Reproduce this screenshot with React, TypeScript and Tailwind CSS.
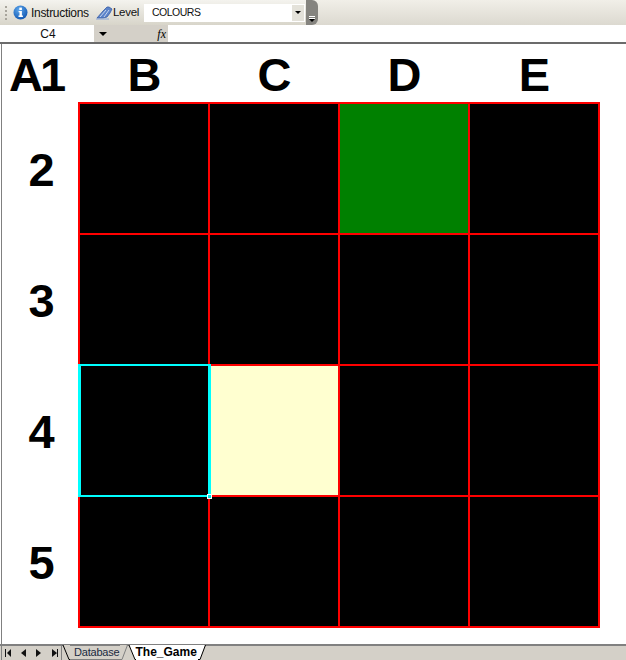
const cells = [
  "bg-black", "bg-black", "bg-[#008000]", "bg-black",
  "bg-black", "bg-black", "bg-black", "bg-black",
  "selected", "bg-[#ffffd0]", "bg-black", "bg-black",
  "bg-black", "bg-black", "bg-black", "bg-black",
];

function InfoIcon() {
  return (
    <svg width="15" height="15" viewBox="0 0 15 15">
      <defs>
        <radialGradient id="info" cx="40%" cy="30%" r="75%">
          <stop offset="0" stopColor="#5fa8ec" />
          <stop offset="1" stopColor="#0f55b0" />
        </radialGradient>
      </defs>
      <circle cx="7.5" cy="7.5" r="7" fill="url(#info)" />
      <rect x="6.3" y="2.6" width="2.6" height="2.4" fill="#fff" />
      <path d="M5.6 6h3.3v4.6h1v1.3H5.5v-1.3h1V7.3h-.9z" fill="#fff" />
    </svg>
  );
}

function LevelIcon() {
  return (
    <svg width="17" height="14" viewBox="0 0 17 14">
      <path d="M1 12 L7 5 L11 1 L13 1 L16 3 L14 7 L11 11 L7 12 L3 12 Z" fill="#5c83c9" stroke="#3a5ea6" strokeWidth="0.8" />
      <path d="M4 11 L10 4 M8 11 L13 4" stroke="#cfdcf2" strokeWidth="0.9" />
      <path d="M0 13 H13" stroke="#8aa6d8" strokeWidth="1" />
    </svg>
  );
}

function Tab({ label, active }: { label: string; active?: boolean }) {
  const fill = active ? "#ffffff" : "#d4d0c8";
  return (
    <div className="flex h-[15px] items-stretch">
      <svg width="8" height="15" viewBox="0 0 8 15" className="shrink-0">
        <path d="M1 0 L7 14.5 H8 V0 Z" fill={fill} />
        <path d="M1 0 L7 14.5 H8" fill="none" stroke="#000" strokeWidth="1" />
      </svg>
      <div
        className={
          active
            ? "flex items-center border-b border-white bg-white pr-[1px] text-[12px] font-bold text-black"
            : "flex items-center border-b border-[#808080] pl-[4px] text-[11px] tracking-[-0.2px] text-[#1a2a40]"
        }
      >
        {label}
      </div>
      <svg width="8" height="15" viewBox="0 0 8 15" className="shrink-0">
        <path d="M7 0 L2 14.5 H0 V0 Z" fill={fill} />
        <path d="M7.5 0 L2 14.5 H0" fill="none" stroke={active ? "#000" : "#808080"} strokeWidth="1" />
      </svg>
    </div>
  );
}

function NavArrows() {
  return (
    <svg width="59" height="12" viewBox="0 0 59 12" className="shrink-0">
      <path d="M3 2v8h1V2zM9 2v8L5 6z" fill="#111" />
      <path d="M24 2v8l-5-4z" fill="#111" />
      <path d="M34 2v8l5-4z" fill="#111" />
      <path d="M50 2v8l5-4zM56 2v8h-1V2z" fill="#111" />
    </svg>
  );
}

export default function App() {
  return (
    <div className="flex h-[660px] w-[626px] flex-col overflow-hidden bg-white font-['Liberation_Sans',sans-serif]">
      {/* toolbar */}
      <div className="flex h-[25px] shrink-0 bg-gradient-to-b from-[#f1efe8] to-[#dcd9d0]">
        <div className="flex h-[25px] w-[318px] items-center rounded-r-md bg-gradient-to-b from-[#f4f3ee] to-[#d8d5ca]">
          <div className="ml-[5px] flex h-[14px] w-[3px] flex-col justify-between">
            <div className="h-[2px] w-[2px] bg-[#a8a59c]" />
            <div className="h-[2px] w-[2px] bg-[#a8a59c]" />
            <div className="h-[2px] w-[2px] bg-[#a8a59c]" />
            <div className="h-[2px] w-[2px] bg-[#a8a59c]" />
          </div>
          <div className="ml-[5px] flex items-center">
            <InfoIcon />
          </div>
          <span className="ml-[3px] w-[58px] text-[12px] tracking-[-0.3px] text-[#101010]">Instructions</span>
          <div className="ml-[7px] flex items-center">
            <LevelIcon />
          </div>
          <span className="w-[31px] text-[11.5px] tracking-[-0.3px] text-[#101010]">Level</span>
          <div className="flex h-[18px] w-[161px] items-center justify-between bg-white pl-[8px]">
            <span className="text-[10.5px] tracking-[-0.5px] text-[#101010]">COLOURS</span>
            <div className="mr-[1px] flex h-[16px] w-[12px] items-center justify-center bg-[#e4e2da]">
              <div className="h-0 w-0 border-x-[3px] border-t-[3px] border-x-transparent border-t-black" />
            </div>
          </div>
          <div className="ml-[1px] flex h-[25px] w-[12px] flex-col items-center justify-end rounded-r-md bg-[#85847f] pb-[3px]">
            <div className="mb-[1px] h-[1px] w-[6px] bg-white" />
            <div className="h-[1px] w-[6px] bg-white" />
            <div className="h-0 w-0 border-x-[3px] border-t-[3px] border-x-transparent border-t-black" />
          </div>
        </div>
      </div>

      {/* formula bar */}
      <div className="flex h-[17px] shrink-0 bg-white">
        <div className="ml-[2px] flex w-[92px] items-center justify-center text-[12px] text-[#101010]">C4</div>
        <div className="flex w-[74px] items-center justify-between bg-[#d4d0c8] pl-[5px] pr-[2px]">
          <div className="h-0 w-0 border-x-[4px] border-t-[4px] border-x-transparent border-t-black" />
          <span className="font-['Liberation_Serif',serif] text-[12px] italic text-black">fx</span>
        </div>
      </div>

      {/* sheet */}
      <div className="flex min-h-0 flex-1 flex-col border-t-2 border-[#6b6b6b]">
        <div className="ml-[1px] flex min-h-0 flex-1 flex-col border-l-[1px] border-[#808080]">
          <div className="flex h-[58px] shrink-0 items-center pt-[2px] text-[47px] font-bold leading-none text-black">
            <div className="w-[76px] pr-[8px] text-center tracking-[-3px]">A1</div>
            <div className="w-[130px] pl-[3px] text-center">B</div>
            <div className="w-[130px] pl-[3px] text-center">C</div>
            <div className="w-[130px] pl-[3px] text-center">D</div>
            <div className="w-[130px] pl-[3px] text-center">E</div>
          </div>
          <div className="flex">
            <div className="flex w-[76px] flex-col pl-[3px] pt-[2px] text-[47px] font-bold leading-none text-black">
              {["2", "3", "4", "5"].map((n) => (
                <div key={n} className="flex h-[131px] items-center justify-center">
                  {n}
                </div>
              ))}
            </div>
            <div className="grid h-[526px] w-[522px] grid-cols-[repeat(4,128px)] grid-rows-[repeat(4,129px)] gap-[2px] bg-[#ff0000] p-[2px]">
              {cells.map((c, i) =>
                c === "selected" ? (
                  <div key={i} className="relative bg-black">
                    <div className="absolute -bottom-[2px] -left-[2px] -right-[3px] -top-[2px] border-x-[3px] border-y-2 border-[#00ffff]" />
                    <div className="absolute -bottom-[4px] -right-[4px] h-[5px] w-[5px] border border-white bg-[#00e0e0]" />
                  </div>
                ) : (
                  <div key={i} className={c} />
                ),
              )}
            </div>
          </div>
        </div>

        {/* sheet tabs */}
        <div className="flex h-[16px] shrink-0 items-start border-t-2 border-[#808080] bg-[#d4d0c8]">
          <div className="ml-[1px] flex h-[14px] items-center border-l border-[#808080]">
            <NavArrows />
          </div>
          <div className="h-[14px] w-px bg-[#808080]" />
          <div className="-mt-[1px] flex">
            <Tab label="Database" />
            <Tab label="The_Game" active />
          </div>
        </div>
      </div>
    </div>
  );
}
